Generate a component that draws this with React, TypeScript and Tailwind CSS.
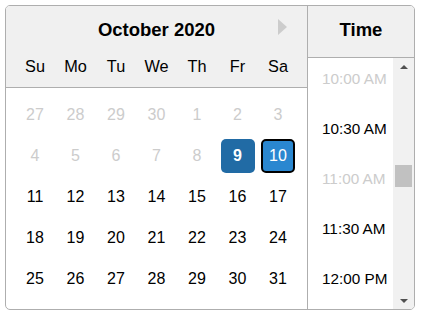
import React from "react";

const weeks: { d: number; muted?: boolean; sel?: "a" | "b" }[][] = [
  [
    { d: 27, muted: true },
    { d: 28, muted: true },
    { d: 29, muted: true },
    { d: 30, muted: true },
    { d: 1, muted: true },
    { d: 2, muted: true },
    { d: 3, muted: true },
  ],
  [
    { d: 4, muted: true },
    { d: 5, muted: true },
    { d: 6, muted: true },
    { d: 7, muted: true },
    { d: 8, muted: true },
    { d: 9, sel: "a" },
    { d: 10, sel: "b" },
  ],
  [11, 12, 13, 14, 15, 16, 17].map((d) => ({ d })),
  [18, 19, 20, 21, 22, 23, 24].map((d) => ({ d })),
  [25, 26, 27, 28, 29, 30, 31].map((d) => ({ d })),
];

const names = ["Su", "Mo", "Tu", "We", "Th", "Fr", "Sa"];

const times = [
  { t: "10:00 AM", muted: true },
  { t: "10:30 AM" },
  { t: "11:00 AM", muted: true },
  { t: "11:30 AM" },
  { t: "12:00 PM" },
];

export default function App() {
  return (
    <div className="p-[5px] bg-white" style={{ fontFamily: '"Liberation Sans", Arial, sans-serif' }}>
      <div className="w-[410px] h-[305px] border border-[#aeaeae] rounded-[5px] flex overflow-hidden bg-white text-black">
        {/* Month */}
        <div className="w-[301px] flex flex-col">
          <div className="bg-[#f0f0f0] border-b border-[#aeaeae] h-[82px] flex flex-col">
            <div className="relative h-[48px] flex items-center justify-center">
              <span className="text-[18.5px] font-bold leading-none">October 2020</span>
              <span className="absolute left-[272px] top-[13px] w-0 h-0 border-l-[9px] border-l-[#cccccc] border-y-[8.5px] border-y-transparent" />
            </div>
            <div className="flex justify-center">
              <div className="grid grid-cols-[repeat(7,40.5px)]">
                {names.map((n) => (
                  <div key={n} className="h-[24px] flex items-center justify-center text-[16.3px] leading-none">
                    {n}
                  </div>
                ))}
              </div>
            </div>
          </div>
          <div className="flex justify-center pt-[6px]">
            <div className="grid grid-cols-[repeat(7,40.5px)]">
              {weeks.flat().map((c, i) => (
                <div key={i} className="h-[41px] flex items-center justify-center">
                  <div
                    className={
                      "w-[34px] h-[34px] flex items-center justify-center text-[16px] leading-none rounded-[5px] " +
                      (c.muted ? "text-[#cccccc] " : "") +
                      (c.sel === "a" ? "bg-[#216ba5] text-white font-bold " : "") +
                      (c.sel === "b" ? "bg-[#2a87d0] text-white border-2 border-black " : "")
                    }
                  >
                    {c.d}
                  </div>
                </div>
              ))}
            </div>
          </div>
        </div>
        {/* Time */}
        <div className="w-[107px] border-l border-[#aeaeae] flex flex-col">
          <div className="h-[52px] pb-[3px] bg-[#f0f0f0] border-b border-[#aeaeae] flex items-center justify-center">
            <span className="text-[18.5px] font-bold leading-none">Time</span>
          </div>
          <div className="flex flex-1 min-h-0">
            <div className="w-[85px] overflow-hidden">
              <div className="-mt-[4px]">
                {times.map((x) => (
                  <div
                    key={x.t}
                    className={"h-[50px] flex items-center pl-[14px] text-[15.3px] leading-none whitespace-nowrap " + (x.muted ? "text-[#cccccc]" : "")}
                  >
                    {x.t}
                  </div>
                ))}
              </div>
            </div>
            <div className="w-[21px] bg-[#f1f1f1] flex flex-col items-center">
              <div className="h-[17px] flex items-center justify-center">
                <span className="w-0 h-0 border-b-[4px] border-b-[#505050] border-x-[4px] border-x-transparent" />
              </div>
              <div className="h-[90px]" />
              <div className="w-[17px] h-[22px] bg-[#c1c1c1]" />
              <div className="flex-1" />
              <div className="h-[17px] flex items-center justify-center">
                <span className="w-0 h-0 border-t-[4px] border-t-[#505050] border-x-[4px] border-x-transparent" />
              </div>
            </div>
          </div>
        </div>
      </div>
    </div>
  );
}
